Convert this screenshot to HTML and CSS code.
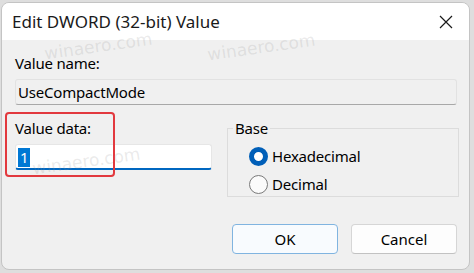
FILE: index.html
```html
<!DOCTYPE html>
<html lang="en">
  <head>
    <meta charset="UTF-8" />
    <title>Edit DWORD (32-bit) Value</title>
    <link rel="stylesheet" href="styles.css">
  </head>
  <body>
    <div class="dialog">
      <div class="titlebar">
        <span class="title">Edit DWORD (32-bit) Value</span>
        <svg class="close" width="14" height="14" viewBox="0 0 14 14">
          <path d="M1 1 L13 13 M13 1 L1 13" stroke="#1a1a1a" stroke-width="1.2" fill="none" />
        </svg>
      </div>
      <div class="content">
        <div class="label">Value name:</div>
        <div class="field readonly">UseCompactMode</div>
        <div class="row">
          <div class="col">
            <div class="label">Value data:</div>
            <div class="field input"><span class="sel">1</span></div>
          </div>
          <fieldset class="base">
            <legend>Base</legend>
            <div class="radio"><span class="dot on"></span>Hexadecimal</div>
            <div class="radio"><span class="dot"></span>Decimal</div>
          </fieldset>
        </div>
        <div class="buttons">
          <button class="btn default">OK</button>
          <button class="btn">Cancel</button>
        </div>
      </div>
      <div class="highlight"></div>
      <span class="mark m1">winaero.com</span>
      <span class="mark m2">winaero.com</span>
      <span class="mark m4">winaero.com</span>
    </div>
  </body>
</html>
```

FILE: styles.css
```css
body {
  margin: 0;
  background: #dedede;
  font-family: "Noto Sans", "Open Sans", sans-serif;
  color: #000;
  height: 273px;
  overflow: hidden;
}
.dialog {
  position: relative;
  margin: 2px 2px 0 1px;
  width: 469px;
  height: 268px;
  border: 1px solid #c4c4c4;
  border-radius: 8px;
  background: #f0f0f0;
  overflow: hidden;
  box-sizing: border-box;
}
.titlebar {
  height: 37px;
  background: #fff;
  display: flex;
  align-items: center;
  justify-content: space-between;
  padding: 0 16px 0 10px;
}
.title {
  font-size: 17px;
  color: #1a1a1a;
}
.content {
  padding: 13px 12px 0 13px;
}
.label {
  font-size: 15px;
  line-height: 20px;
  letter-spacing: -0.2px;
}
.field {
  height: 26px;
  margin-top: 6px;
  box-sizing: border-box;
  font-size: 15px;
  line-height: 22px;
  padding: 0 2px;
  letter-spacing: -0.2px;
}
.readonly {
  background: #f0f0f0;
  border: 1px solid #e2e2e2;
  border-bottom: 1px solid #a8a8a8;
  border-radius: 3px;
  line-height: 24px;
}
.input {
  background: #fff;
  border: 1px solid #e6e6e6;
  border-bottom: 2px solid #0067c0;
  border-radius: 3px;
  padding-top: 1px;
}
.sel {
  background: #0078d4;
  color: #fff;
  display: inline-block;
  line-height: 19px;
  padding: 0 2px;
}
.row {
  display: grid;
  grid-template-columns: 197px 232px;
  gap: 15px;
  margin-top: 13px;
}
.base {
  margin: 2px 0 0;
  padding: 6px 0 0 21px;
  border: 1px solid #dcdcdc;
  height: 77px;
  box-sizing: border-box;
}
.base legend {
  font-size: 15px;
  padding: 0 2px;
  margin-left: -16px;
  line-height: 16px;
  letter-spacing: -0.2px;
}
.radio {
  display: flex;
  align-items: center;
  gap: 4px;
  font-size: 15px;
  height: 28px;
  letter-spacing: -0.2px;
}
.dot {
  width: 19px;
  height: 19px;
  border-radius: 50%;
  border: 1px solid #7a7a7a;
  background: #fbfbfb;
  box-sizing: border-box;
}
.dot.on {
  border: 5px solid #005fb8;
  background: #fff;
}
.buttons {
  display: flex;
  justify-content: flex-end;
  gap: 13px;
  margin-top: 27px;
}
.btn {
  width: 106px;
  height: 30px;
  background: #fdfdfd;
  border: 1px solid #d6d6d6;
  border-bottom-color: #c2c2c2;
  border-radius: 4px;
  font-family: "Noto Sans", "Open Sans", sans-serif;
  font-size: 15px;
  color: #000;
}
.btn.default {
  border: 1px solid #80b4e0;
  background: #f8fbfe;
}
.highlight {
  position: absolute;
  left: 3px;
  top: 109px;
  width: 110px;
  height: 65px;
  border: 2px solid #e2393e;
  border-radius: 4px;
  box-sizing: border-box;
}
.mark {
  position: absolute;
  font-family: "DejaVu Sans", sans-serif;
  font-size: 17px;
  color: rgba(150, 150, 150, 0.2);
  transform: rotate(-8deg);
  white-space: nowrap;
  pointer-events: none;
}
.m1 { left: 42px; top: 33px; }
.m2 { left: 205px; top: 34px; }
.m4 { left: 30px; top: 148px; }
```
